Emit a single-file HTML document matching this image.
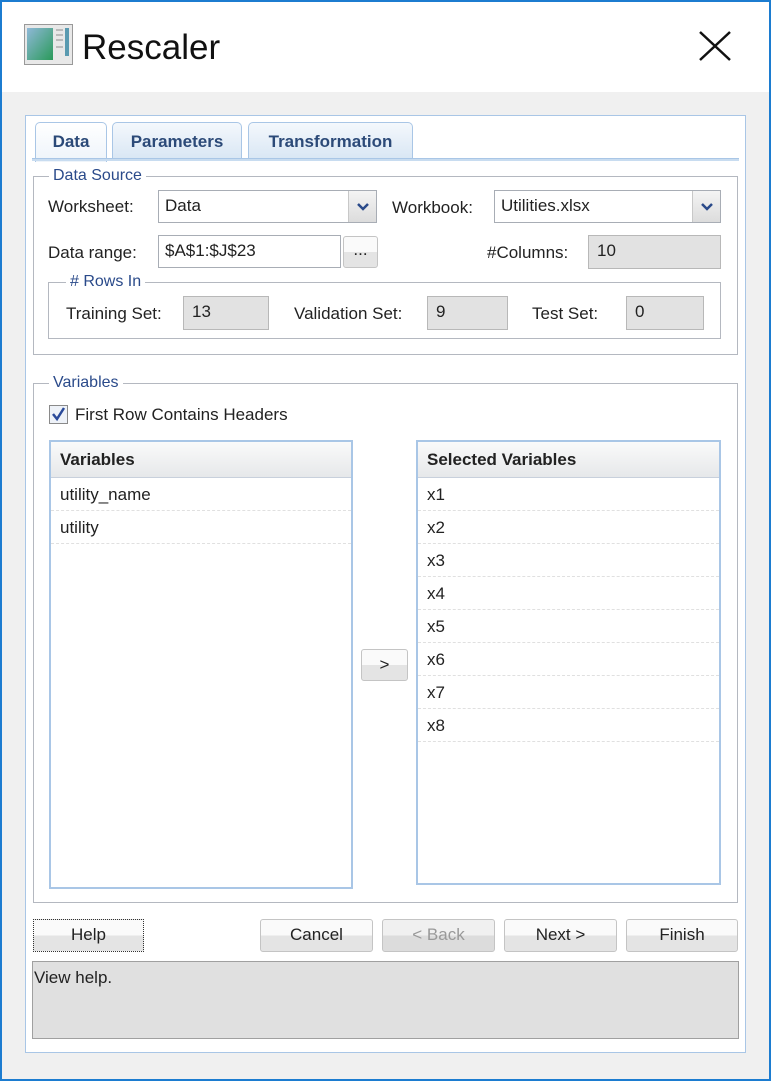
<!DOCTYPE html>
<html><head><meta charset="utf-8"><style>
*{box-sizing:border-box;margin:0;padding:0}
body{width:771px;height:1081px;position:relative;overflow:hidden;font-family:"Liberation Sans",sans-serif;font-size:17px;color:#222;background:#f0f0f0}
.a{position:absolute}
.t{position:absolute;white-space:nowrap;line-height:20px}
.fs{position:absolute;border:1px solid #b4b8c0}
.lg{position:absolute;background:#fff;color:#2a4a8a;padding:0 4px;line-height:18px;font-size:16px}
.inp{position:absolute;background:#fff;border:1px solid #a8adb5;padding-left:6px;line-height:30px}
.ro{position:absolute;background:#e2e2e2;border:1px solid #b8b8b8;padding-left:8px;line-height:30px}
.dd{position:absolute;right:0;top:0;bottom:0;width:28px;border-left:1px solid #c8c8c8;background:linear-gradient(#f4f4f4,#dcdcdc)}
.btn{position:absolute;border:1px solid #c4c4c4;border-radius:3px;background:linear-gradient(#fafafa 50%,#e4e4e4 50%);text-align:center;line-height:30px}
.list{position:absolute;border:2px solid #a9c6e6;background:#fff}
.lh{height:36px;border-bottom:1px solid #c8d0dc;background:linear-gradient(#fafafa,#e6e8ea);font-weight:bold;padding-left:9px;line-height:36px}
.row{height:33px;border-bottom:1px dashed #e0e0e0;padding-left:9px;line-height:34px}
.tab{position:absolute;top:122px;height:38px;border:1px solid #a9c6e6;border-bottom:none;border-radius:5px 5px 0 0;background:linear-gradient(#f4f8fc,#d8e6f4);font-weight:bold;color:#2c4a78;text-align:center;line-height:38px}
</style></head><body>
<div class="a" style="left:0;top:0;width:771px;height:1081px;border:2px solid #1c7cd0;z-index:9;pointer-events:none"></div>
<div class="a" style="left:0;top:0;width:771px;height:92px;background:#fff"></div>
<svg class="a" style="left:24px;top:24px" width="49" height="41" viewBox="0 0 49 41">
<rect x="0.5" y="0.5" width="48" height="40" fill="#e8e8e8" stroke="#999"/>
<defs><linearGradient id="g" x1="0" y1="0" x2="1" y2="1"><stop offset="0" stop-color="#8fb8d8"/><stop offset="1" stop-color="#2a9a5a"/></linearGradient></defs>
<rect x="3" y="4" width="26" height="32" fill="url(#g)"/>
<rect x="32" y="5" width="7" height="2" fill="#bbb"/><rect x="32" y="10" width="7" height="2" fill="#bbb"/><rect x="32" y="15" width="7" height="2" fill="#bbb"/><rect x="32" y="22" width="7" height="2" fill="#bbb"/>
<rect x="41" y="4" width="4" height="28" fill="#5a9ab0"/></svg>
<div class="t" style="left:82px;top:28px;font-size:35px;line-height:40px;color:#111">Rescaler</div>
<svg class="a" style="left:698px;top:30px" width="34" height="32"><path d="M2 2L32 30M32 2L2 30" stroke="#111" stroke-width="2.5"/></svg>

<div class="a" style="left:25px;top:115px;width:721px;height:938px;border:1px solid #a9c6e6;background:#fff"></div>
<div class="tab" style="left:35px;width:72px;background:linear-gradient(#fff,#eef4fa);height:40px">Data</div>
<div class="tab" style="left:112px;width:130px">Parameters</div>
<div class="tab" style="left:248px;width:165px">Transformation</div>
<div class="a" style="left:32px;top:158px;width:707px;height:3px;background:#c8dcf0;border-top:1px solid #a9c6e6"></div>

<div class="fs" style="left:33px;top:176px;width:705px;height:179px"></div>
<div class="lg" style="left:49px;top:167px">Data Source</div>
<div class="t" style="left:48px;top:197px">Worksheet:</div>
<div class="inp" style="left:158px;top:190px;width:219px;height:33px">Data<div class="dd"><svg width="28" height="31"><path d="M9 13l5 5 5-5" stroke="#2a4a8a" stroke-width="2.5" fill="none"/></svg></div></div>
<div class="t" style="left:392px;top:198px">Workbook:</div>
<div class="inp" style="left:494px;top:190px;width:227px;height:33px">Utilities.xlsx<div class="dd"><svg width="28" height="31"><path d="M9 13l5 5 5-5" stroke="#2a4a8a" stroke-width="2.5" fill="none"/></svg></div></div>
<div class="t" style="left:48px;top:243px">Data range:</div>
<div class="inp" style="left:158px;top:235px;width:183px;height:33px">$A$1:$J$23</div>
<div class="btn" style="left:343px;top:236px;width:35px;height:32px;line-height:26px">...</div>
<div class="t" style="left:487px;top:243px">#Columns:</div>
<div class="ro" style="left:588px;top:235px;width:133px;height:34px">10</div>
<div class="fs" style="left:48px;top:282px;width:673px;height:57px"></div>
<div class="lg" style="left:66px;top:273px"># Rows In</div>
<div class="t" style="left:66px;top:304px">Training Set:</div>
<div class="ro" style="left:183px;top:296px;width:86px;height:34px">13</div>
<div class="t" style="left:294px;top:304px">Validation Set:</div>
<div class="ro" style="left:427px;top:296px;width:81px;height:34px">9</div>
<div class="t" style="left:532px;top:304px">Test Set:</div>
<div class="ro" style="left:626px;top:296px;width:78px;height:34px">0</div>

<div class="fs" style="left:33px;top:383px;width:705px;height:520px"></div>
<div class="lg" style="left:49px;top:374px">Variables</div>
<div class="a" style="left:49px;top:405px;width:19px;height:19px;border:1px solid #8a8a8a;background:#eef2f8"><svg width="17" height="17"><path d="M3 8l4 5 7-11" stroke="#2a4a9a" stroke-width="2.5" fill="none"/></svg></div>
<div class="t" style="left:75px;top:405px">First Row Contains Headers</div>

<div class="list" style="left:49px;top:440px;width:304px;height:449px">
<div class="lh">Variables</div><div class="row">utility_name</div><div class="row">utility</div></div>
<div class="btn" style="left:361px;top:649px;width:47px;height:32px">&gt;</div>
<div class="list" style="left:416px;top:440px;width:305px;height:445px">
<div class="lh">Selected Variables</div><div class="row">x1</div><div class="row">x2</div><div class="row">x3</div><div class="row">x4</div><div class="row">x5</div><div class="row">x6</div><div class="row">x7</div><div class="row">x8</div></div>

<div class="btn" style="left:33px;top:919px;width:111px;height:33px;border:1px dotted #333;border-radius:0">Help</div>
<div class="btn" style="left:260px;top:919px;width:113px;height:33px">Cancel</div>
<div class="btn" style="left:382px;top:919px;width:113px;height:33px;color:#999;background:linear-gradient(#f0f0f0 50%,#dcdcdc 50%)">&lt; Back</div>
<div class="btn" style="left:504px;top:919px;width:113px;height:33px">Next &gt;</div>
<div class="btn" style="left:626px;top:919px;width:112px;height:33px">Finish</div>
<div class="a" style="left:32px;top:961px;width:707px;height:78px;background:#e0e0e0;border:1px solid #a0a0a0;padding:6px 0 0 1px">View help.</div>
</body></html>
